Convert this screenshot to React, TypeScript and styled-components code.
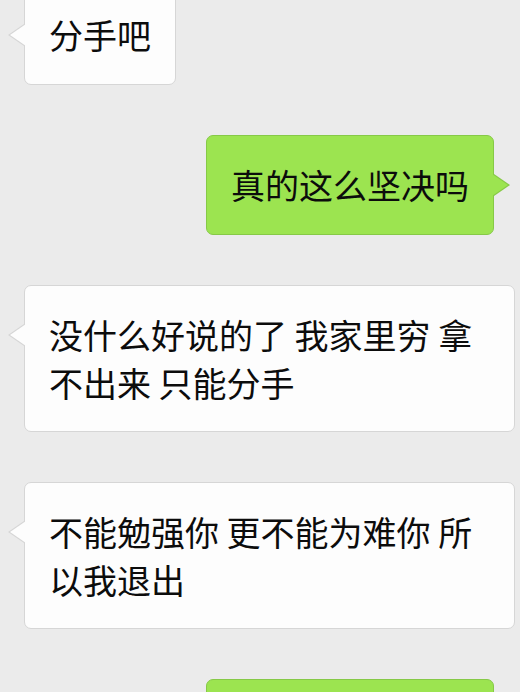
import React from "react";
import styled, { createGlobalStyle, css } from "styled-components";

type Side = "left" | "right";

const Colors = {
  page: "#ebebeb",
  white: "#fdfdfd",
  whiteBorder: "#d6d6d6",
  green: "#9ce450",
  greenBorder: "#86c947",
  text: "#0c0c0c",
};

const GlobalStyle = createGlobalStyle`
  html, body {
    margin: 0;
    padding: 0;
    background: ${Colors.page};
    overflow: hidden;
  }
  #root {
    height: 692px;
    overflow: hidden;
  }
`;

// last bubble is only half on screen, its text is below the fold
const messages: { side: Side; text: string }[] = [
  { side: "left", text: "分手吧" },
  { side: "right", text: "真的这么坚决吗" },
  { side: "left", text: "没什么好说的了 我家里穷 拿不出来 只能分手" },
  { side: "left", text: "不能勉强你 更不能为难你 所以我退出" },
  { side: "right", text: "" },
];

export default function App() {
  return (
    <>
      <GlobalStyle />
      <ChatWindow>
        <MessageList>
          {messages.map((m, i) => (
            <Row key={i} $side={m.side}>
              <Bubble $side={m.side} $wide={!m.text}>
                {m.text}
              </Bubble>
            </Row>
          ))}
        </MessageList>
      </ChatWindow>
    </>
  );
}

const ChatWindow = styled.div`
  width: 520px;
  height: 692px;
  overflow: hidden;
  background: ${Colors.page};
`;

// the conversation is scrolled a little, so the first bubble is cut at the top
const MessageList = styled.div`
  display: flex;
  flex-direction: column;
  gap: 50px;
  margin-top: -15px;
`;

const Row = styled.div<{ $side: Side }>`
  display: flex;
  justify-content: ${(p) => (p.$side === "left" ? "flex-start" : "flex-end")};
  padding: ${(p) => (p.$side === "left" ? "0 5px 0 24px" : "0 26px 0 0")};
`;

const Bubble = styled.div<{ $side: Side; $wide?: boolean }>`
  position: relative;
  box-sizing: border-box;
  max-width: 491px;
  min-width: ${(p) => (p.$wide ? "288px" : "0")};
  min-height: 100px;
  padding: 25px 24px 24px 24px;
  border-radius: 7px;
  font-family: "Noto Sans CJK SC", "Noto Sans", sans-serif;
  font-size: 34px;
  line-height: 48px;
  color: ${Colors.text};
  background: ${(p) => (p.$side === "left" ? Colors.white : Colors.green)};
  border: 1px solid
    ${(p) => (p.$side === "left" ? Colors.whiteBorder : Colors.greenBorder)};

  &::before,
  &::after {
    content: "";
    position: absolute;
    top: 38px;
    width: 0;
    height: 0;
    border-top: 11px solid transparent;
    border-bottom: 11px solid transparent;
  }

  ${(p) =>
    p.$side === "left"
      ? css`
          &::before {
            left: -17px;
            border-right: 16px solid ${Colors.whiteBorder};
          }
          &::after {
            left: -15px;
            border-right: 16px solid ${Colors.white};
          }
        `
      : css`
          &::before {
            right: -17px;
            border-left: 16px solid ${Colors.greenBorder};
          }
          &::after {
            right: -15px;
            border-left: 16px solid ${Colors.green};
          }
        `}
`;
